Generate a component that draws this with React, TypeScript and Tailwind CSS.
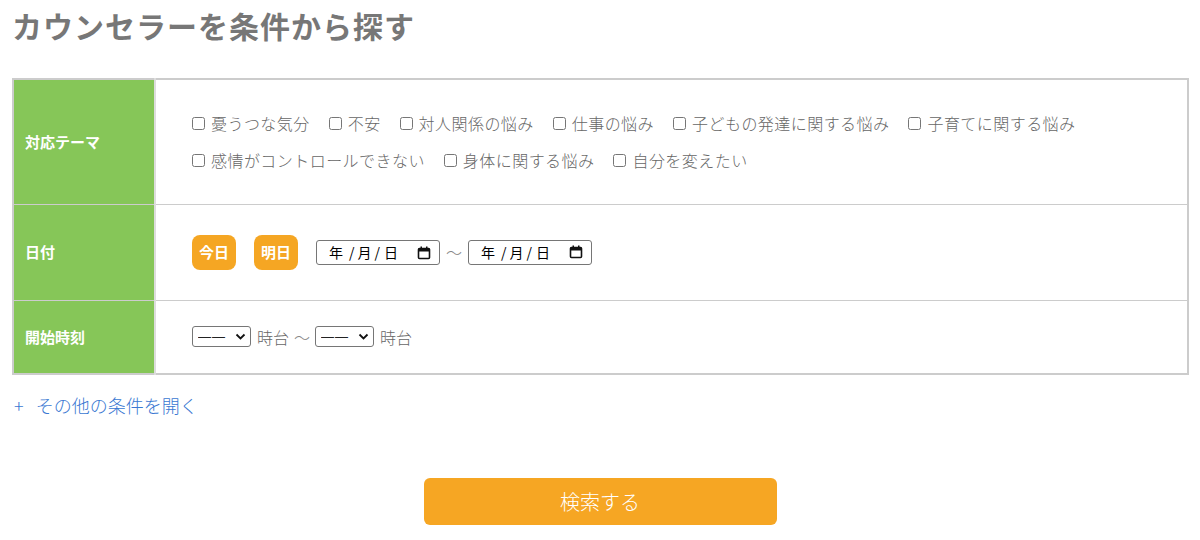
import React, { useState } from "react";

const themes = [
  "憂うつな気分",
  "不安",
  "対人関係の悩み",
  "仕事の悩み",
  "子どもの発達に関する悩み",
  "子育てに関する悩み",
  "感情がコントロールできない",
  "身体に関する悩み",
  "自分を変えたい",
];

const hours = ["——", ...Array.from({ length: 24 }, (_, i) => String(i))];

const DateBox = () => (
  <div className="inline-flex h-[25px] w-[124px] items-center justify-between rounded-[3px] border border-[#767676] bg-white pl-[12px] pr-[8px] text-[14px] text-black">
    <span className="flex items-center gap-[6px]">
      <span>年</span>
      <span>/</span>
      <span className="-ml-[3px]">月</span>
      <span className="-ml-[3px]">/</span>
      <span className="-ml-[2px]">日</span>
    </span>
    <svg width="14" height="14" viewBox="0 0 14 14" fill="none">
      <rect x="1.5" y="2.5" width="11" height="10" rx="1" stroke="#111" strokeWidth="1.6" />
      <rect x="1.5" y="2.5" width="11" height="3" fill="#111" />
      <rect x="3.5" y="0.5" width="1.5" height="2.5" fill="#111" />
      <rect x="9" y="0.5" width="1.5" height="2.5" fill="#111" />
    </svg>
  </div>
);

const HourSelect = () => (
  <label className="inline-flex h-[21px] w-[59px] items-center rounded-[3px] border border-[#767676] bg-white pl-[5px] pr-[4px]">
    <select className="w-full appearance-none bg-transparent font-['Liberation_Sans',sans-serif] text-[13px] tracking-[1px] text-[#222] outline-none">
      {hours.map((h) => (
        <option key={h}>{h}</option>
      ))}
    </select>
    <svg width="11" height="8" viewBox="0 0 11 8" fill="none" className="shrink-0">
      <path d="M1.5 1.5 L5.5 5.5 L9.5 1.5" stroke="#111" strokeWidth="1.8" />
    </svg>
  </label>
);

export default function App() {
  const [checked, setChecked] = useState<Record<string, boolean>>({});

  return (
    <div className="min-h-[540px] bg-white px-[12px] pt-[4px] font-['Noto_Sans_CJK_JP','Noto_Sans',sans-serif] text-[#666]">
      <h1 className="text-[30px] font-bold leading-[42px] tracking-[1px] text-[#777]">
        カウンセラーを条件から探す
      </h1>

      <table className="mt-[32px] w-[1177px] border-collapse border-2 border-[#ccc]">
        <tbody>
          <tr className="h-[125px] border-b border-[#ccc]">
            <th className="w-[142px] bg-[#86c658] pl-[11px] text-left text-[15px] font-bold text-white">
              対応テーマ
            </th>
            <td className="border-l-2 border-[#ddd] pl-[36px] pr-[20px]">
              <div className="flex flex-wrap gap-y-[13px]">
                {themes.map((t) => (
                  <label
                    key={t}
                    className="mr-[19px] flex h-[24px] items-center text-[16px] font-light tracking-[0.45px]"
                  >
                    <input
                      type="checkbox"
                      checked={!!checked[t]}
                      onChange={() => setChecked((p) => ({ ...p, [t]: !p[t] }))}
                      className="mr-[6px] h-[13px] w-[13px]"
                    />
                    {t}
                  </label>
                ))}
              </div>
            </td>
          </tr>
          <tr className="h-[96px] border-b border-[#ccc]">
            <th className="bg-[#86c658] pl-[11px] text-left text-[15px] font-bold text-white">日付</th>
            <td className="border-l-2 border-[#ddd] pl-[36px]">
              <div className="flex items-center">
                <button className="h-[35px] w-[44px] rounded-[8px] bg-[#f5a623] text-[15px] font-bold text-white">
                  今日
                </button>
                <button className="ml-[18px] h-[35px] w-[44px] rounded-[8px] bg-[#f5a623] text-[15px] font-bold text-white">
                  明日
                </button>
                <div className="ml-[18px]">
                  <DateBox />
                </div>
                <span className="mx-[6px] text-[16px] font-light text-[#888]">〜</span>
                <DateBox />
              </div>
            </td>
          </tr>
          <tr className="h-[74px]">
            <th className="bg-[#86c658] pl-[11px] text-left text-[15px] font-bold text-white">開始時刻</th>
            <td className="border-l-2 border-[#ddd] pl-[36px]">
              <div className="flex items-center text-[16px] font-light">
                <HourSelect />
                <span className="ml-[6px]">時台</span>
                <span className="mx-[5px] text-[#888]">〜</span>
                <HourSelect />
                <span className="ml-[6px]">時台</span>
              </div>
            </td>
          </tr>
        </tbody>
      </table>

      <button className="mt-[17px] flex items-center pl-[2px] text-[18px] font-light text-[#3a78d2]">
        <span className="mr-[12px]">+</span>
        その他の条件を開く
      </button>

      <div className="mt-[59px] flex justify-center">
        <button className="h-[47px] w-[353px] rounded-[6px] bg-[#f6a623] text-[20px] font-light text-white">
          検索する
        </button>
      </div>
    </div>
  );
}
